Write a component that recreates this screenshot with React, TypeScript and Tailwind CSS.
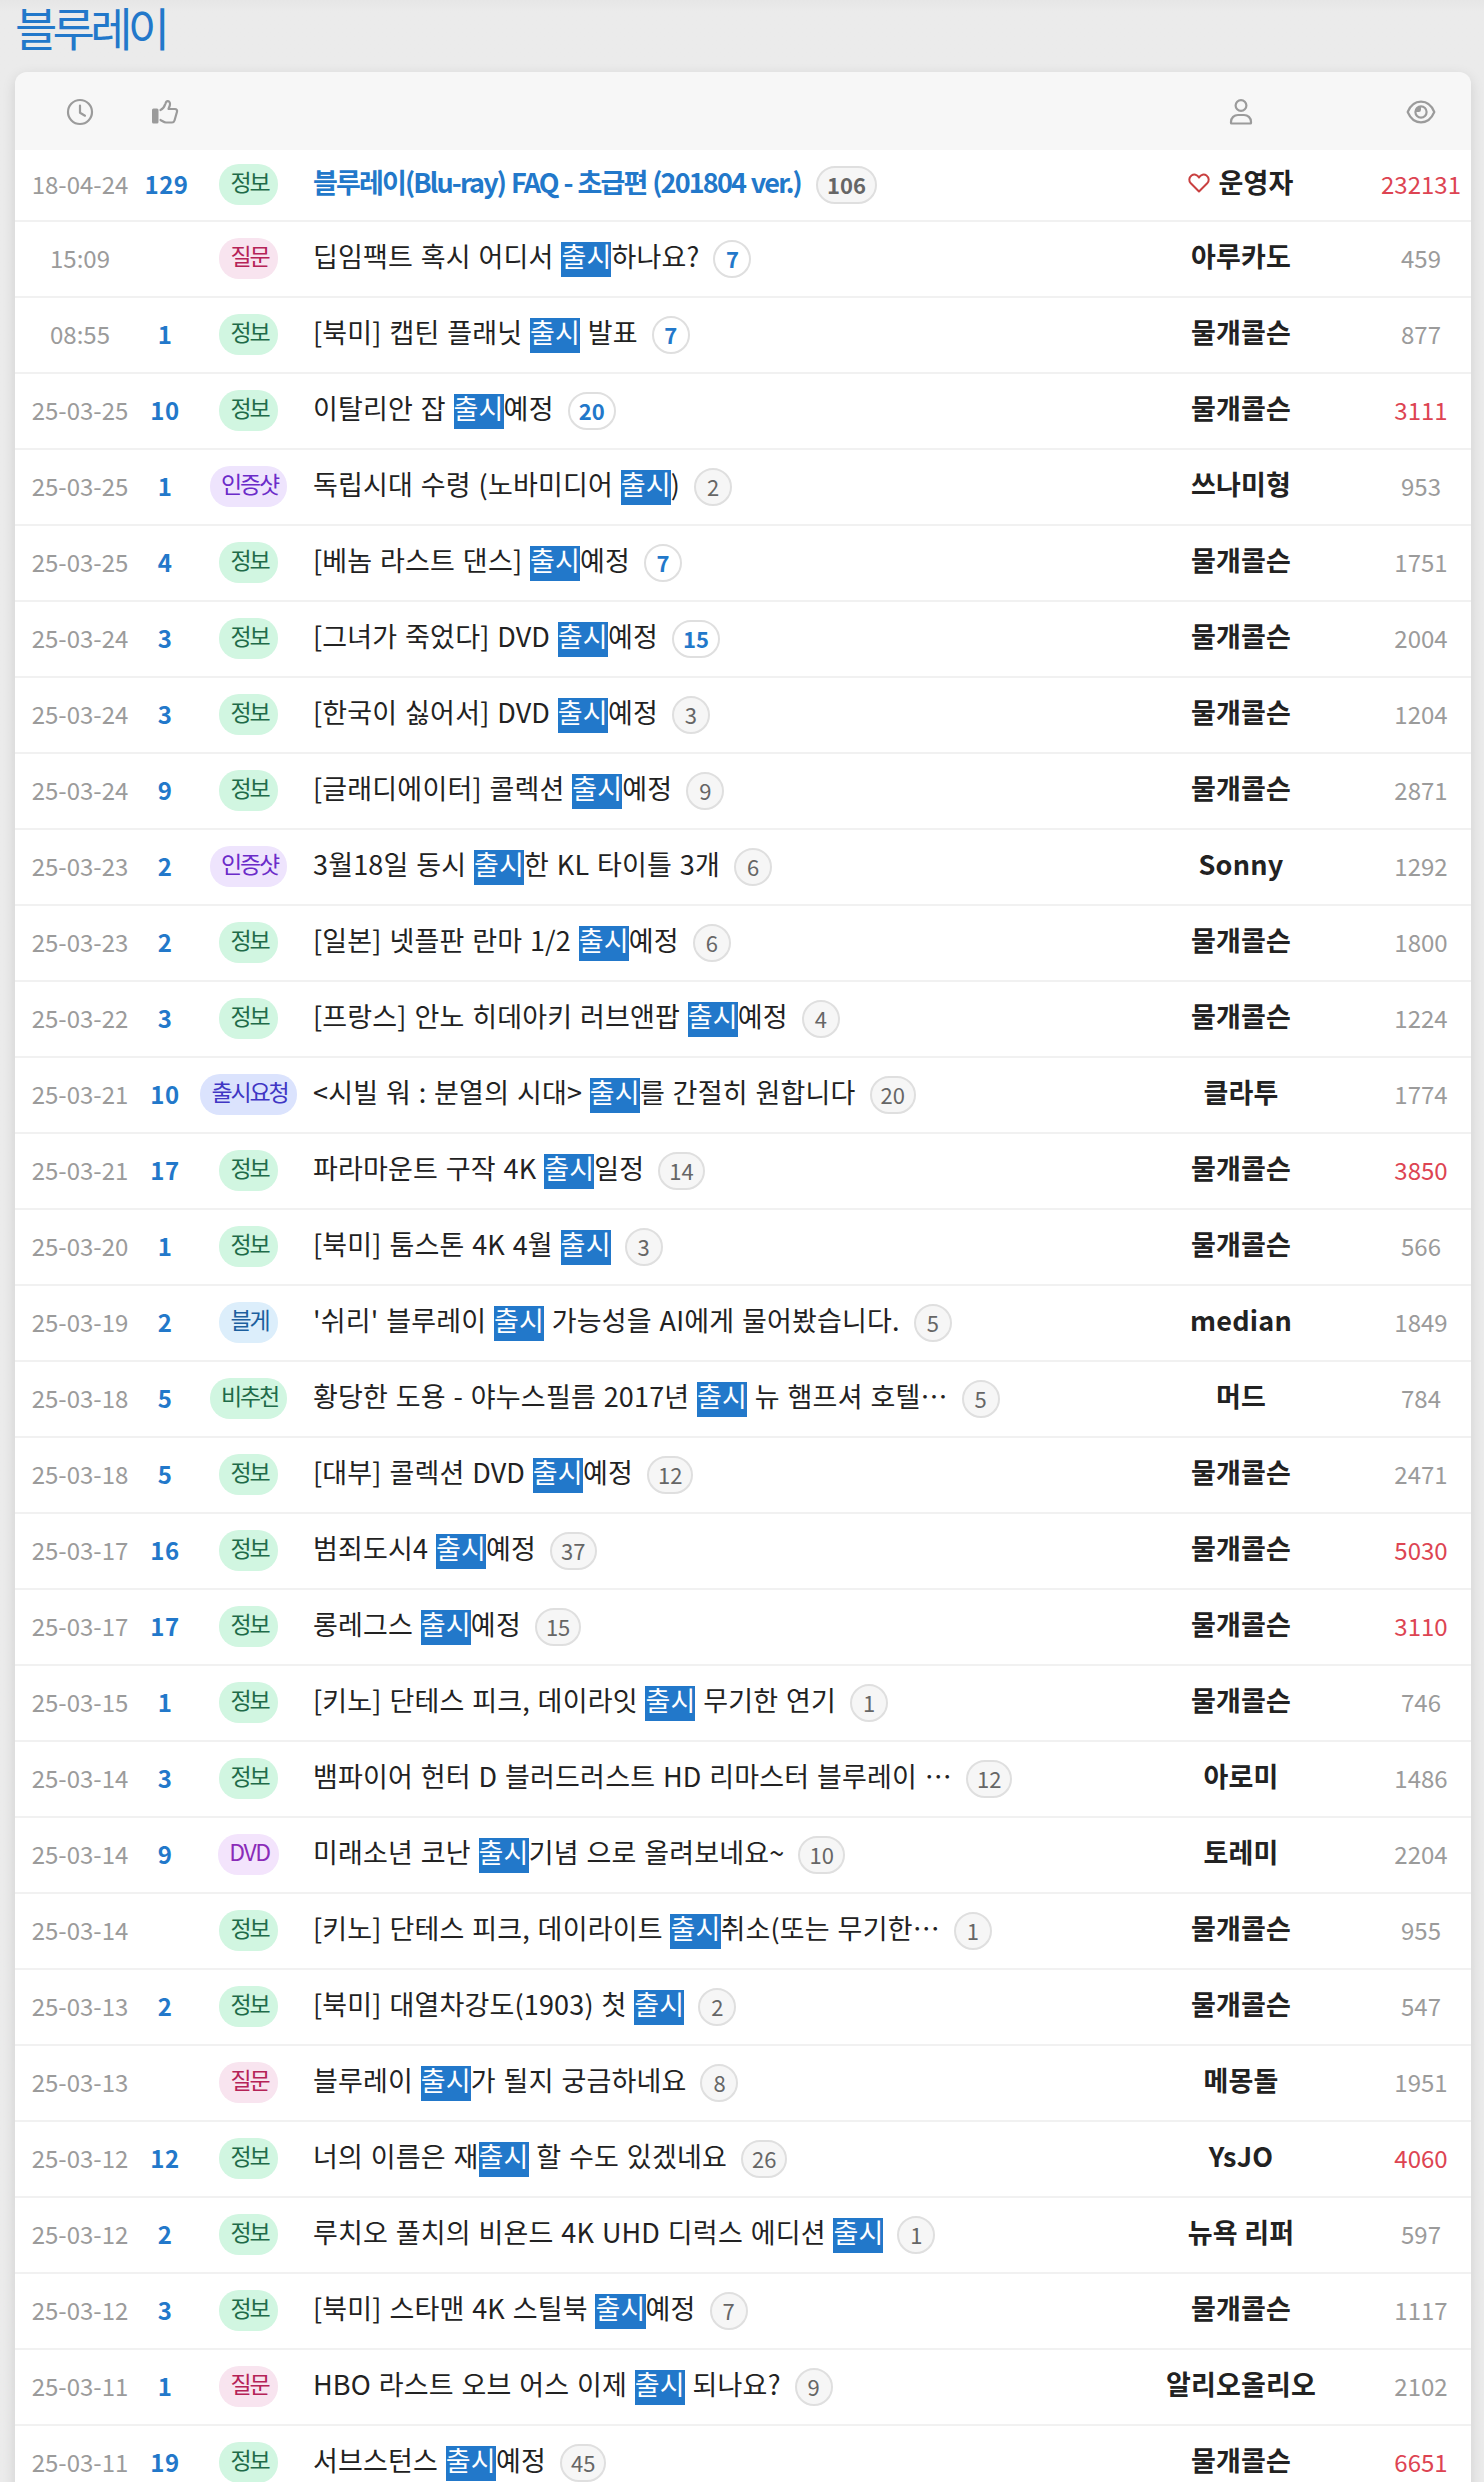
import clsx from 'clsx'

type Post = {
  date: string
  likes?: number
  tag: string
  title: string
  comments: number
  hot?: boolean
  author: string
  views: number
  notice?: boolean
}

const KEYWORD = '출시'

const tagStyles: Record<string, string> = {
  정보: 'bg-[#d1f6e1] text-[#1f6b49]',
  비추천: 'bg-[#d1f6e1] text-[#1f6b49]',
  질문: 'bg-[#f8e4ef] text-[#b52357]',
  인증샷: 'bg-[#eee4fd] text-[#6b2bc9]',
  출시요청: 'bg-[#dbe3fd] text-[#4036c4]',
  블게: 'bg-[#dceefb] text-[#1c5f9e]',
  DVD: 'bg-[#f3e4fc] text-[#8a2bb8]',
}

const posts: Post[] = [
  { date: '18-04-24', likes: 129, tag: '정보', title: '블루레이(Blu-ray) FAQ - 초급편 (201804 ver.)', comments: 106, author: '운영자', views: 232131, notice: true },
  { date: '15:09', tag: '질문', title: '딥임팩트 혹시 어디서 출시하나요?', comments: 7, hot: true, author: '아루카도', views: 459 },
  { date: '08:55', likes: 1, tag: '정보', title: '[북미] 캡틴 플래닛 출시 발표', comments: 7, hot: true, author: '물개콜슨', views: 877 },
  { date: '25-03-25', likes: 10, tag: '정보', title: '이탈리안 잡 출시예정', comments: 20, hot: true, author: '물개콜슨', views: 3111 },
  { date: '25-03-25', likes: 1, tag: '인증샷', title: '독립시대 수령 (노바미디어 출시)', comments: 2, author: '쓰나미형', views: 953 },
  { date: '25-03-25', likes: 4, tag: '정보', title: '[베놈 라스트 댄스] 출시예정', comments: 7, hot: true, author: '물개콜슨', views: 1751 },
  { date: '25-03-24', likes: 3, tag: '정보', title: '[그녀가 죽었다] DVD 출시예정', comments: 15, hot: true, author: '물개콜슨', views: 2004 },
  { date: '25-03-24', likes: 3, tag: '정보', title: '[한국이 싫어서] DVD 출시예정', comments: 3, author: '물개콜슨', views: 1204 },
  { date: '25-03-24', likes: 9, tag: '정보', title: '[글래디에이터] 콜렉션 출시예정', comments: 9, author: '물개콜슨', views: 2871 },
  { date: '25-03-23', likes: 2, tag: '인증샷', title: '3월18일 동시 출시한 KL 타이틀 3개', comments: 6, author: 'Sonny', views: 1292 },
  { date: '25-03-23', likes: 2, tag: '정보', title: '[일본] 넷플판 란마 1/2 출시예정', comments: 6, author: '물개콜슨', views: 1800 },
  { date: '25-03-22', likes: 3, tag: '정보', title: '[프랑스] 안노 히데아키 러브앤팝 출시예정', comments: 4, author: '물개콜슨', views: 1224 },
  { date: '25-03-21', likes: 10, tag: '출시요청', title: '<시빌 워 : 분열의 시대> 출시를 간절히 원합니다', comments: 20, author: '클라투', views: 1774 },
  { date: '25-03-21', likes: 17, tag: '정보', title: '파라마운트 구작 4K 출시일정', comments: 14, author: '물개콜슨', views: 3850 },
  { date: '25-03-20', likes: 1, tag: '정보', title: '[북미] 툼스톤 4K 4월 출시', comments: 3, author: '물개콜슨', views: 566 },
  { date: '25-03-19', likes: 2, tag: '블게', title: "'쉬리' 블루레이 출시 가능성을 AI에게 물어봤습니다.", comments: 5, author: 'median', views: 1849 },
  { date: '25-03-18', likes: 5, tag: '비추천', title: '황당한 도용 - 야누스필름 2017년 출시 뉴 햄프셔 호텔⋯', comments: 5, author: '머드', views: 784 },
  { date: '25-03-18', likes: 5, tag: '정보', title: '[대부] 콜렉션 DVD 출시예정', comments: 12, author: '물개콜슨', views: 2471 },
  { date: '25-03-17', likes: 16, tag: '정보', title: '범죄도시4 출시예정', comments: 37, author: '물개콜슨', views: 5030 },
  { date: '25-03-17', likes: 17, tag: '정보', title: '롱레그스 출시예정', comments: 15, author: '물개콜슨', views: 3110 },
  { date: '25-03-15', likes: 1, tag: '정보', title: '[키노] 단테스 피크, 데이라잇 출시 무기한 연기', comments: 1, author: '물개콜슨', views: 746 },
  { date: '25-03-14', likes: 3, tag: '정보', title: '뱀파이어 헌터 D 블러드러스트 HD 리마스터 블루레이 ⋯', comments: 12, author: '아로미', views: 1486 },
  { date: '25-03-14', likes: 9, tag: 'DVD', title: '미래소년 코난 출시기념 으로 올려보네요~', comments: 10, author: '토레미', views: 2204 },
  { date: '25-03-14', tag: '정보', title: '[키노] 단테스 피크, 데이라이트 출시취소(또는 무기한⋯', comments: 1, author: '물개콜슨', views: 955 },
  { date: '25-03-13', likes: 2, tag: '정보', title: '[북미] 대열차강도(1903) 첫 출시', comments: 2, author: '물개콜슨', views: 547 },
  { date: '25-03-13', tag: '질문', title: '블루레이 출시가 될지 궁금하네요', comments: 8, author: '메몽돌', views: 1951 },
  { date: '25-03-12', likes: 12, tag: '정보', title: '너의 이름은 재출시 할 수도 있겠네요', comments: 26, author: 'YsJO', views: 4060 },
  { date: '25-03-12', likes: 2, tag: '정보', title: '루치오 풀치의 비욘드 4K UHD 디럭스 에디션 출시', comments: 1, author: '뉴욕 리퍼', views: 597 },
  { date: '25-03-12', likes: 3, tag: '정보', title: '[북미] 스타맨 4K 스틸북 출시예정', comments: 7, author: '물개콜슨', views: 1117 },
  { date: '25-03-11', likes: 1, tag: '질문', title: 'HBO 라스트 오브 어스 이제 출시 되나요?', comments: 9, author: '알리오올리오', views: 2102 },
  { date: '25-03-11', likes: 19, tag: '정보', title: '서브스턴스 출시예정', comments: 45, author: '물개콜슨', views: 6651 },
]

function ClockIcon() {
  return (
    <svg width="28" height="28" viewBox="0 0 28 28" fill="none" stroke="currentColor" strokeWidth="2.2" strokeLinecap="round" strokeLinejoin="round">
      <circle cx="14" cy="14" r="12" />
      <path d="M14 7.500v7.200l5 3" />
    </svg>
  )
}

function ThumbIcon() {
  return (
    <svg width="28" height="28" viewBox="0 0 28 28" fill="none" stroke="currentColor" strokeWidth="2.200" strokeLinecap="round" strokeLinejoin="round">
      <rect x="1" y="10.500" width="6.500" height="15" rx="1.500" fill="currentColor" stroke="none" />
      <path d="M9.500 12c3.500-1.500 4-3.500 5-6.500.6-2 1.400-2.500 2.500-2.300 2 .4 2.300 2.300 1.800 4.300l-1.300 3.500h6.500c1.600 0 2.400 1.300 2 2.800l-2.500 8.700c-.4 1.300-1.200 2-2.500 2h-6c-2 0-3.500-1.500-5.500-2.500" />
    </svg>
  )
}

function UserIcon() {
  return (
    <svg width="28" height="28" viewBox="0 0 28 28" fill="none" stroke="currentColor" strokeWidth="2.200" strokeLinejoin="round">
      <circle cx="14" cy="7.500" r="5.400" />
      <path d="M4 25v-1c0-4.300 3.200-7 7-7h6c3.800 0 7 2.700 7 7v1c0 .3-.2.500-.5.500h-19c-.3 0-.5-.2-.5-.5z" />
    </svg>
  )
}

function EyeIcon() {
  return (
    <svg width="30" height="28" viewBox="0 0 30 28" fill="none" stroke="currentColor" strokeWidth="2.200" strokeLinejoin="round">
      <path d="M1.700 14C4.500 7.300 9.300 3.700 15 3.700S25.500 7.300 28.300 14C25.500 20.700 20.700 24.300 15 24.300S4.500 20.700 1.700 14z" />
      <circle cx="15" cy="14" r="5.600" />
      <path d="M15 8.800v3a2.200 2.200 0 0 1-2.200 2.200H9.500c-.2-3.200 2-5.200 5.500-5.200z" fill="currentColor" stroke="none" />
    </svg>
  )
}

function HeartIcon() {
  return (
    <svg className="text-[#c94040]" width="22" height="20" viewBox="0 0 22 20" fill="none" stroke="currentColor" strokeWidth="2" strokeLinejoin="round">
      <path d="M11 4.500C9.300 1.300 5.800.8 3.500 2.500.8 4.600.6 8 2.800 10.300L11 18.500l8.200-8.200C21.400 8 21.200 4.600 18.500 2.500 16.200.8 12.700 1.300 11 4.500z" />
    </svg>
  )
}

function Title({ text }: { text: string }) {
  const parts = text.split(KEYWORD)
  return (
    <>
      {parts.map((part, i) => (
        <span key={i}>
          {i > 0 && <mark className="inline-block h-[35px] bg-[#2278ca] align-top leading-[27px] text-white">{KEYWORD}</mark>}
          {part}
        </span>
      ))}
    </>
  )
}

const columns = 'grid grid-cols-[130px_40px_127px_1fr_200px_130px]'

function Row({ post }: { post: Post }) {
  const { notice, hot } = post
  return (
    <li className={clsx(columns, 'shrink-0 items-center border-b-2 border-[#f1f1f1] bg-white', notice ? 'h-[72px]' : 'h-[76px]')}>
      <span className="pb-[3px] text-center text-[24px] text-[#9b9b9b]">{post.date}</span>
      <span className={clsx('flex justify-center pb-[3px] text-[24px] font-bold tracking-[0.500px] text-[#2278ca]', notice && 'pl-[3px]')}>{post.likes}</span>
      <span className="flex justify-center">
        <span
          className={clsx(
            '-mt-px flex h-[41px] items-center whitespace-nowrap rounded-[20px] pl-[11px] pr-[9px] text-[23px] leading-none',
            post.tag === 'DVD' ? 'tracking-[-1.300px]' : 'tracking-[-2.100px]',
            tagStyles[post.tag],
          )}
        >
          <span className="-mt-[6px]">{post.tag}</span>
        </span>
      </span>
      <span className="flex items-center whitespace-nowrap pl-px">
        <span
          className={clsx(
            'h-[35px] text-[27px] leading-[27px]',
            notice ? 'font-bold tracking-[-1.850px] text-[#2278ca] [word-spacing:1.500px]' : 'tracking-[0.180px] text-[#222] [word-spacing:1.500px]',
          )}
        >
          <Title text={post.title} />
        </span>
        <span
          className={clsx(
            'flex h-[38px] min-w-[38px] items-center justify-center rounded-[19px] border-2 border-[#dfdfdf] px-[9px] pb-[3px] text-[22px] leading-none',
            notice ? 'ml-[15px]' : 'ml-[14px]',
            hot ? 'bg-white font-bold text-[#2278ca]' : 'bg-[#f6f6f6] text-[#666]',
            notice && 'font-bold',
          )}
        >
          {post.comments}
        </span>
      </span>
      <span className="flex items-center justify-center gap-[8px] whitespace-nowrap pb-[5px] text-[27px] font-bold tracking-[0.200px] text-[#222]">
        {notice && <HeartIcon />}
        {post.author}
      </span>
      <span className={clsx('pb-[3px] pl-[30px] text-center text-[24px]', post.views >= 3000 ? 'text-[#dd4452]' : 'text-[#9b9b9b]')}>{post.views}</span>
    </li>
  )
}

export default function App() {
  return (
    <div className="h-[2482px] overflow-hidden bg-[#ebebeb] bg-linear-to-b from-[#e6e6e6] to-[#ebebeb] to-[12px] pl-[15px] pr-[13px] font-['Noto_Sans_CJK_KR',sans-serif]">
      <h1 className="h-[72px] text-[46px] leading-[53px] tracking-[-4.700px] text-[#2278ca]">블루레이</h1>
      <div className="overflow-hidden rounded-t-[12px] shadow-[0_4px_14px_rgba(0,0,0,0.12)]">
        <div className={clsx(columns, 'h-[78px] items-center justify-items-center bg-[#f7f7f7] pt-[2px] text-[#9b9b9b]')}>
          <ClockIcon />
          <ThumbIcon />
          <span />
          <span />
          <UserIcon />
          <span className="pl-[30px]">
            <EyeIcon />
          </span>
        </div>
        <ul className="flex flex-col">
          {posts.map((post, i) => (
            <Row key={i} post={post} />
          ))}
        </ul>
      </div>
    </div>
  )
}
